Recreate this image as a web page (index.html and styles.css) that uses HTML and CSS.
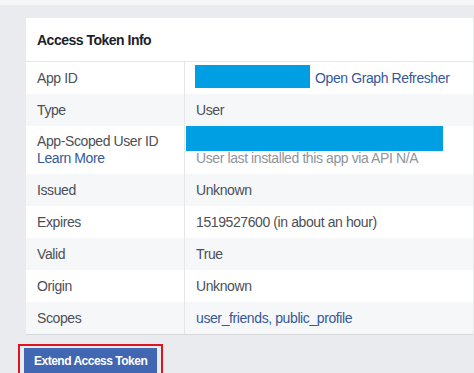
FILE: index.html
```html
<!DOCTYPE html>
<html>
<head>
<meta charset="utf-8">
<link rel="stylesheet" href="styles.css">
</head>
<body>
<div class="topstrip"></div>
<div class="page">
  <div class="card">
    <div class="card-header">Access Token Info</div>
    <div class="table">
      <div class="row">
        <div class="label">App ID</div>
        <div class="value"><span class="redact-inline"></span><a class="link">Open Graph Refresher</a></div>
      </div>
      <div class="row alt">
        <div class="label">Type</div>
        <div class="value">User</div>
      </div>
      <div class="row tall">
        <div class="label">App-Scoped User ID<br><a class="link">Learn More</a></div>
        <div class="value stacked">
          <span class="redact-over"></span>
          <div class="line">&nbsp;</div>
          <div class="line muted">User last installed this app via API N/A</div>
        </div>
      </div>
      <div class="row alt">
        <div class="label">Issued</div>
        <div class="value">Unknown</div>
      </div>
      <div class="row">
        <div class="label">Expires</div>
        <div class="value">1519527600 (in about an hour)</div>
      </div>
      <div class="row alt">
        <div class="label">Valid</div>
        <div class="value">True</div>
      </div>
      <div class="row">
        <div class="label">Origin</div>
        <div class="value">Unknown</div>
      </div>
      <div class="row alt last">
        <div class="label">Scopes</div>
        <div class="value"><a class="link">user_friends, public_profile</a></div>
      </div>
    </div>
  </div>
  <div class="actions">
    <div class="highlight">
      <button class="btn">Extend Access Token</button>
    </div>
  </div>
</div>
</body>
</html>
```

FILE: styles.css
```css
html, body {
  margin: 0;
  padding: 0;
  height: 100%;
  overflow: hidden;
}
body {
  background: #e9ebee;
  font-family: "Liberation Sans", Arial, sans-serif;
  color: #4b4f56;
}
.topstrip {
  height: 5px;
  background: #f5f6f8;
}
.page {
  padding-top: 13px;
}
.card {
  margin: 0 1px 0 26px;
  background: #fff;
}
.card-header {
  height: 44px;
  box-sizing: border-box;
  border-bottom: 1px solid #e5e6e9;
  padding-left: 11px;
  display: flex;
  align-items: center;
  font-size: 14px;
  font-weight: bold;
  letter-spacing: -0.5px;
  color: #1d2129;
}
.table {
  display: flex;
  flex-direction: column;
}
.row {
  display: grid;
  grid-template-columns: 159px 1fr;
  height: 32px;
  font-size: 14px;
  letter-spacing: -0.4px;
  background: #fff;
}
.row.alt {
  background: #f6f7f9;
}
.row.tall {
  height: 48px;
}
.row.last {
  border-bottom: 1px solid #d6d8dc;
  height: 33px;
  box-sizing: border-box;
}
.label {
  border-right: 1px solid #e5e6e9;
  padding-left: 11px;
  display: flex;
  align-items: center;
}
.row.tall .label {
  display: block;
  padding-top: 7px;
  line-height: 17px;
}
.value {
  padding-left: 11px;
  display: flex;
  align-items: center;
}
.value.stacked {
  position: relative;
  display: block;
  padding-top: 7px;
  line-height: 17px;
}
.link {
  color: #365899;
  text-decoration: none;
}
.muted {
  color: #90949c;
}
.redact-inline {
  display: inline-block;
  width: 115px;
  height: 23px;
  margin-left: -1px;
  margin-right: 5px;
  margin-top: -3px;
  background: #009fe3;
}
.redact-over {
  position: absolute;
  left: 1px;
  top: 0;
  width: 257px;
  height: 25px;
  background: #009fe3;
}
.actions {
  padding: 9px 0 0 18px;
}
.highlight {
  display: inline-block;
  border: 2px solid #e0141e;
  padding: 2px 4px 6px 4px;
}
.btn {
  display: block;
  height: 25px;
  padding: 0 9px;
  margin: 0;
  background: #4267b2;
  border: 1px solid #4267b2;
  color: #fff;
  font-family: "Liberation Sans", Arial, sans-serif;
  font-size: 12px;
  font-weight: bold;
  letter-spacing: -0.5px;
}
```
